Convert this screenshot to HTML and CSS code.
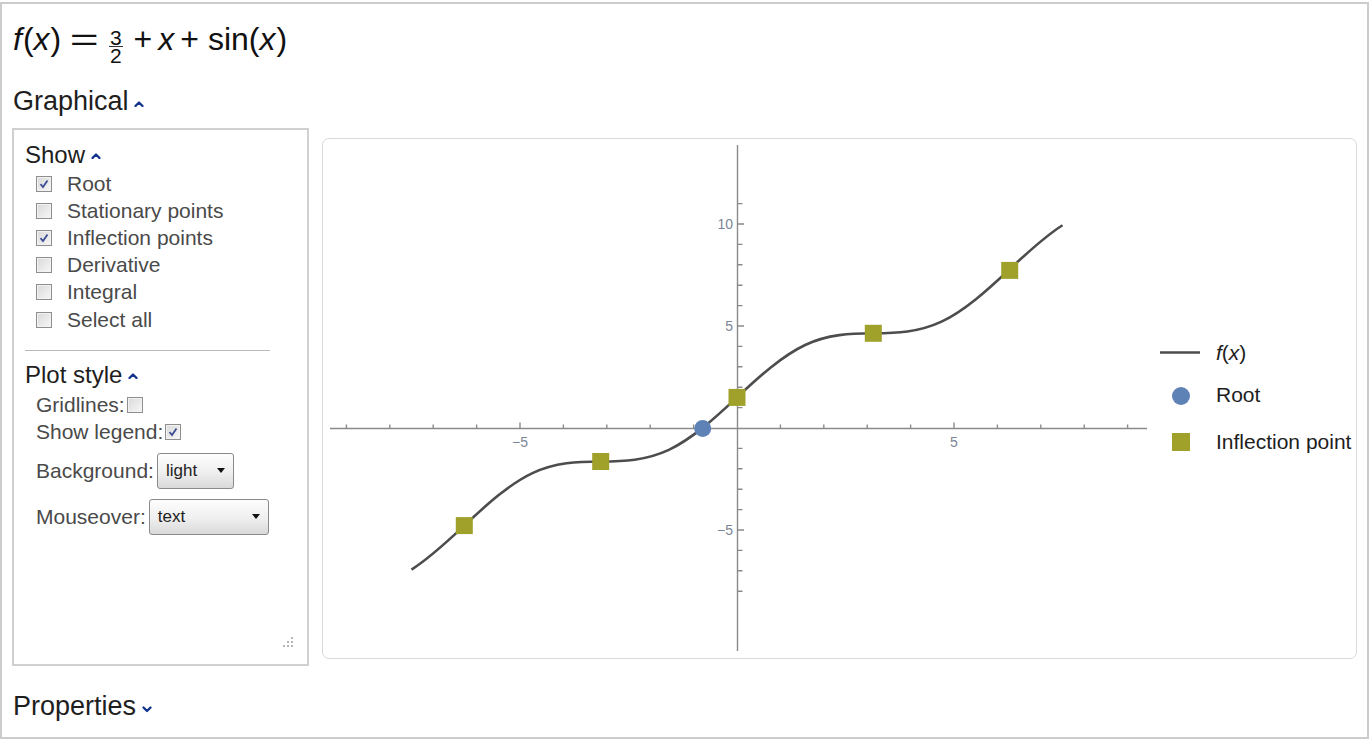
FILE: index.html
```html
<!DOCTYPE html>
<html>
<head>
<meta charset="utf-8">
<link rel="stylesheet" href="styles.css">
</head>
<body>
<div class="page">
  <div class="formula"><span class="it">f</span>(<span class="it">x</span>)<span class="eq">=</span><span class="frac"><span class="num">3</span><span class="den">2</span></span><span class="plus">+</span><span class="it xv">x</span><span class="plus">+</span><span class="sin">sin(<span class="it">x</span>)</span></div>

  <div class="heading">Graphical<svg class="chev" width="10" height="6" viewBox="0 0 10 6"><path d="M1.5 5 L5 1.5 L8.5 5" /></svg></div>

  <div class="row">
    <div class="panel">
      <div class="subhead">Show<svg class="chev sm" width="10" height="6" viewBox="0 0 10 6"><path d="M1.5 5 L5 1.5 L8.5 5" /></svg></div>
      <div class="list">
        <div class="item"><span class="cb on"><svg width="12" height="12" viewBox="0 0 12 12"><path d="M2.5 6.2 L5 9 L9.5 2.5"/></svg></span><span class="lbl">Root</span></div>
        <div class="item"><span class="cb"></span><span class="lbl">Stationary points</span></div>
        <div class="item"><span class="cb on"><svg width="12" height="12" viewBox="0 0 12 12"><path d="M2.5 6.2 L5 9 L9.5 2.5"/></svg></span><span class="lbl">Inflection points</span></div>
        <div class="item"><span class="cb"></span><span class="lbl">Derivative</span></div>
        <div class="item"><span class="cb"></span><span class="lbl">Integral</span></div>
        <div class="item"><span class="cb"></span><span class="lbl">Select all</span></div>
      </div>
      <div class="sep"></div>
      <div class="subhead ps">Plot style<svg class="chev sm" width="10" height="6" viewBox="0 0 10 6"><path d="M1.5 5 L5 1.5 L8.5 5" /></svg></div>
      <div class="opts">
        <div class="opt">Gridlines:<span class="cb"></span></div>
        <div class="opt">Show legend:<span class="cb on"><svg width="12" height="12" viewBox="0 0 12 12"><path d="M2.5 6.2 L5 9 L9.5 2.5"/></svg></span></div>
        <div class="selrow first">Background:<div class="sel w1"><span>light</span><span class="arrow"></span></div></div>
        <div class="selrow">Mouseover:<div class="sel w2"><span>text</span><span class="arrow"></span></div></div>
      </div>
      <svg class="grip" width="14" height="14" viewBox="0 0 14 14">
        <rect x="10" y="1" width="2" height="2"/>
        <rect x="6" y="5" width="2" height="2"/><rect x="10" y="5" width="2" height="2"/>
        <rect x="2" y="9" width="2" height="2"/><rect x="6" y="9" width="2" height="2"/><rect x="10" y="9" width="2" height="2"/>
      </svg>
    </div>

    <div class="chart">
      <svg class="plot" width="1033" height="519" viewBox="323 139 1033 519">
        <g class="axes">
          <line x1="330" y1="428.5" x2="1147" y2="428.5"/>
          <line x1="737.5" y1="145" x2="737.5" y2="651"/>
          <path d="M346.4 428.5V424.5 M389.8 428.5V424.5 M433.2 428.5V424.5 M476.6 428.5V424.5 M520 428.5V422.5 M563.4 428.5V424.5 M606.8 428.5V424.5 M650.2 428.5V424.5 M693.6 428.5V424.5 M780.4 428.5V424.5 M823.8 428.5V424.5 M867.2 428.5V424.5 M910.6 428.5V424.5 M954 428.5V422.5 M997.4 428.5V424.5 M1040.8 428.5V424.5 M1084.2 428.5V424.5 M1127.6 428.5V424.5"/>
          <path d="M737.5 203.6H742.5 M737.5 224H744 M737.5 244.4H742.5 M737.5 264.8H742.5 M737.5 285.2H742.5 M737.5 305.6H742.5 M737.5 326H744 M737.5 346.4H742.5 M737.5 366.8H742.5 M737.5 387.2H742.5 M737.5 407.6H742.5 M737.5 448.4H742.5 M737.5 468.8H742.5 M737.5 489.2H742.5 M737.5 509.6H742.5 M737.5 530H744 M737.5 550.4H742.5 M737.5 570.8H742.5 M737.5 591.2H742.5"/>
        </g>
        <g class="ticklbl">
          <text x="733" y="229" text-anchor="end">10</text>
          <text x="733" y="331" text-anchor="end">5</text>
          <text x="733" y="535" text-anchor="end">−5</text>
          <text x="520" y="446.5" text-anchor="middle">−5</text>
          <text x="954" y="446.5" text-anchor="middle">5</text>
        </g>
        <g transform="translate(737,428) scale(43.4,-20.4)">
          <path class="curve" vector-effect="non-scaling-stroke" d="M-7.5 -6.938 C-7.0944 -6.3918 -6.6888 -5.5944 -6.2832 -4.7832 C-5.7596 -3.736 -5.236 -2.736 -4.7124 -2.2124 C-4.1888 -1.6888 -3.6652 -1.6416 -3.1416 -1.6416 C-2.618 -1.6416 -2.0944 -1.5944 -1.5708 -1.0708 C-1.0472 -0.5472 -0.5236 0.4528 0 1.5 C0.5236 2.5472 1.0472 3.5472 1.5708 4.0708 C2.0944 4.5944 2.618 4.6416 3.1416 4.6416 C3.6652 4.6416 4.1888 4.6888 4.7124 5.2124 C5.236 5.736 5.7596 6.736 6.2832 7.7832 C6.6888 8.5944 7.0944 9.3918 7.5 9.938"/>
        </g>
        <circle class="root" cx="702.7" cy="428.5" r="8.5"/>
        <g class="infl">
          <rect x="455.8" y="517.1" width="17" height="17"/>
          <rect x="592.2" y="453" width="17" height="17"/>
          <rect x="728.5" y="388.9" width="17" height="17"/>
          <rect x="864.8" y="324.8" width="17" height="17"/>
          <rect x="1001.2" y="261.9" width="17" height="17"/>
        </g>
        <g class="legend">
          <line x1="1160" y1="352.5" x2="1200" y2="352.5" class="curve"/>
          <text x="1216" y="360"><tspan font-style="italic">f</tspan>(<tspan font-style="italic">x</tspan>)</text>
          <circle class="root" cx="1181" cy="396" r="9"/>
          <text x="1216" y="402">Root</text>
          <rect class="sq" x="1172" y="433" width="18" height="18"/>
          <text x="1216" y="448.5">Inflection point</text>
        </g>
      </svg>
    </div>
  </div>

  <div class="heading props">Properties<svg class="chev dn" width="10" height="7" viewBox="0 0 10 7"><path d="M1.5 1.5 L5 5 L8.5 1.5" /></svg></div>
</div>
</body>
</html>
```

FILE: styles.css
```css
html, body {
  margin: 0;
  padding: 0;
  background: #ffffff;
}

body {
  font-family: "Liberation Sans", Arial, sans-serif;
  color: #222;
}

.page {
  margin-top: 2px;
  width: 1369px;
  height: 737px;
  box-sizing: border-box;
  border: 2px solid #cccccc;
  padding: 0 10px;
}

/* formula */
.formula {
  margin-top: 17px;
  height: 36px;
  line-height: 36px;
  font-size: 32px;
  color: #111;
  white-space: nowrap;
  padding-left: 1px;
}

.it {
  font-style: italic;
  padding-right: 1px;
}

.eq {
  display: inline-block;
  transform: scaleX(1.55);
  margin-left: 14px;
  margin-right: 12px;
}

.frac {
  display: inline-flex;
  flex-direction: column;
  align-items: center;
  vertical-align: 5px;
  font-size: 21px;
  line-height: 17px;
  margin-left: 3px;
  margin-right: 8px;
}

.frac .num {
  padding: 0 1px;
  border-bottom: 1px solid #333;
}

.plus {
  margin: 0 6px 0 3px;
}

.xv {
  margin-right: 2px;
}

.sin {
  margin-left: 3px;
}

/* headings */
.heading {
  margin-top: 29px;
  font-size: 27px;
  line-height: 30px;
  height: 30px;
  color: #1e1e1e;
  padding-left: 1px;
}

.heading.props {
  margin-top: 25px;
}

.chev {
  margin-left: 5px;
  vertical-align: 3px;
}

.chev path {
  fill: none;
  stroke: #13348c;
  stroke-width: 2.3;
  stroke-linecap: round;
  stroke-linejoin: round;
}

.chev.sm {
  margin-left: 6px;
  vertical-align: 4px;
}

.chev.dn {
  margin-left: 6px;
  vertical-align: 2px;
}

/* layout row */
.row {
  display: flex;
  align-items: flex-start;
  gap: 13px;
  margin-top: 12px;
}

.panel {
  position: relative;
  width: 297px;
  height: 538px;
  box-sizing: border-box;
  border: 2px solid #d0d0d0;
  padding: 11px 0 0 11px;
  flex: none;
}

.subhead {
  font-size: 24px;
  line-height: 28px;
  height: 28px;
  color: #1e1e1e;
}

.list {
  margin-top: 1px;
}

.item {
  display: flex;
  align-items: center;
  height: 27.2px;
  padding-left: 11px;
  font-size: 21px;
  color: #4a4a4a;
}

.lbl {
  margin-left: 15px;
}

.cb {
  width: 16px;
  height: 16px;
  box-sizing: border-box;
  border: 1px solid #8e8e8e;
  background: linear-gradient(135deg, #d9d9d9, #f7f7f7);
  box-shadow: inset 0 0 0 1px #f2f2f2;
  display: inline-flex;
  align-items: center;
  justify-content: center;
  flex: none;
}

.cb svg path {
  fill: none;
  stroke: #3d4e93;
  stroke-width: 1.8;
}

.sep {
  margin-top: 17px;
  width: 245px;
  height: 1px;
  background: #b9b9b9;
}

.subhead.ps {
  margin-top: 10px;
}

.opts {
  margin-top: 2px;
  padding-left: 11px;
  font-size: 21px;
  color: #4a4a4a;
}

.opt {
  display: flex;
  align-items: center;
  height: 27.2px;
}

.opt .cb {
  margin-left: 2px;
}

.selrow {
  display: flex;
  align-items: center;
  height: 36px;
  margin-top: 10px;
}

.selrow.first {
  margin-top: 7px;
}

.sel {
  margin-left: 3px;
  height: 36px;
  box-sizing: border-box;
  border: 1px solid #8a8a8a;
  border-radius: 3px;
  background: linear-gradient(#fdfdfd, #efefef 55%, #d9d9d9);
  display: flex;
  align-items: center;
  justify-content: space-between;
  padding: 0 8px 0 8px;
  font-size: 17px;
  color: #222;
}

.sel.w1 {
  width: 77px;
}

.sel.w2 {
  width: 120px;
}

.arrow {
  width: 0;
  height: 0;
  border-left: 4.5px solid transparent;
  border-right: 4.5px solid transparent;
  border-top: 5px solid #111;
}

.grip {
  position: absolute;
  right: 12px;
  bottom: 14px;
}

.grip rect {
  fill: #b5b5b5;
}

/* chart */
.chart {
  margin-top: 10px;
  width: 1035px;
  height: 521px;
  box-sizing: border-box;
  border: 1px solid #d9d9d9;
  border-radius: 7px;
  flex: none;
}

.plot {
  display: block;
}

.axes line,
.axes path {
  stroke: #8a8a8a;
  stroke-width: 1.4;
  fill: none;
}

.ticklbl text {
  font-family: "Liberation Sans", Arial, sans-serif;
  font-size: 14px;
  fill: #7c8596;
}

.curve {
  fill: none;
  stroke: #4d4d4d;
  stroke-width: 2.6;
}

.root {
  fill: #5f82b6;
}

.infl rect,
.sq {
  fill: #a0a12b;
}

.legend text {
  font-family: "Liberation Sans", Arial, sans-serif;
  font-size: 21px;
  fill: #1e1e1e;
}
```
